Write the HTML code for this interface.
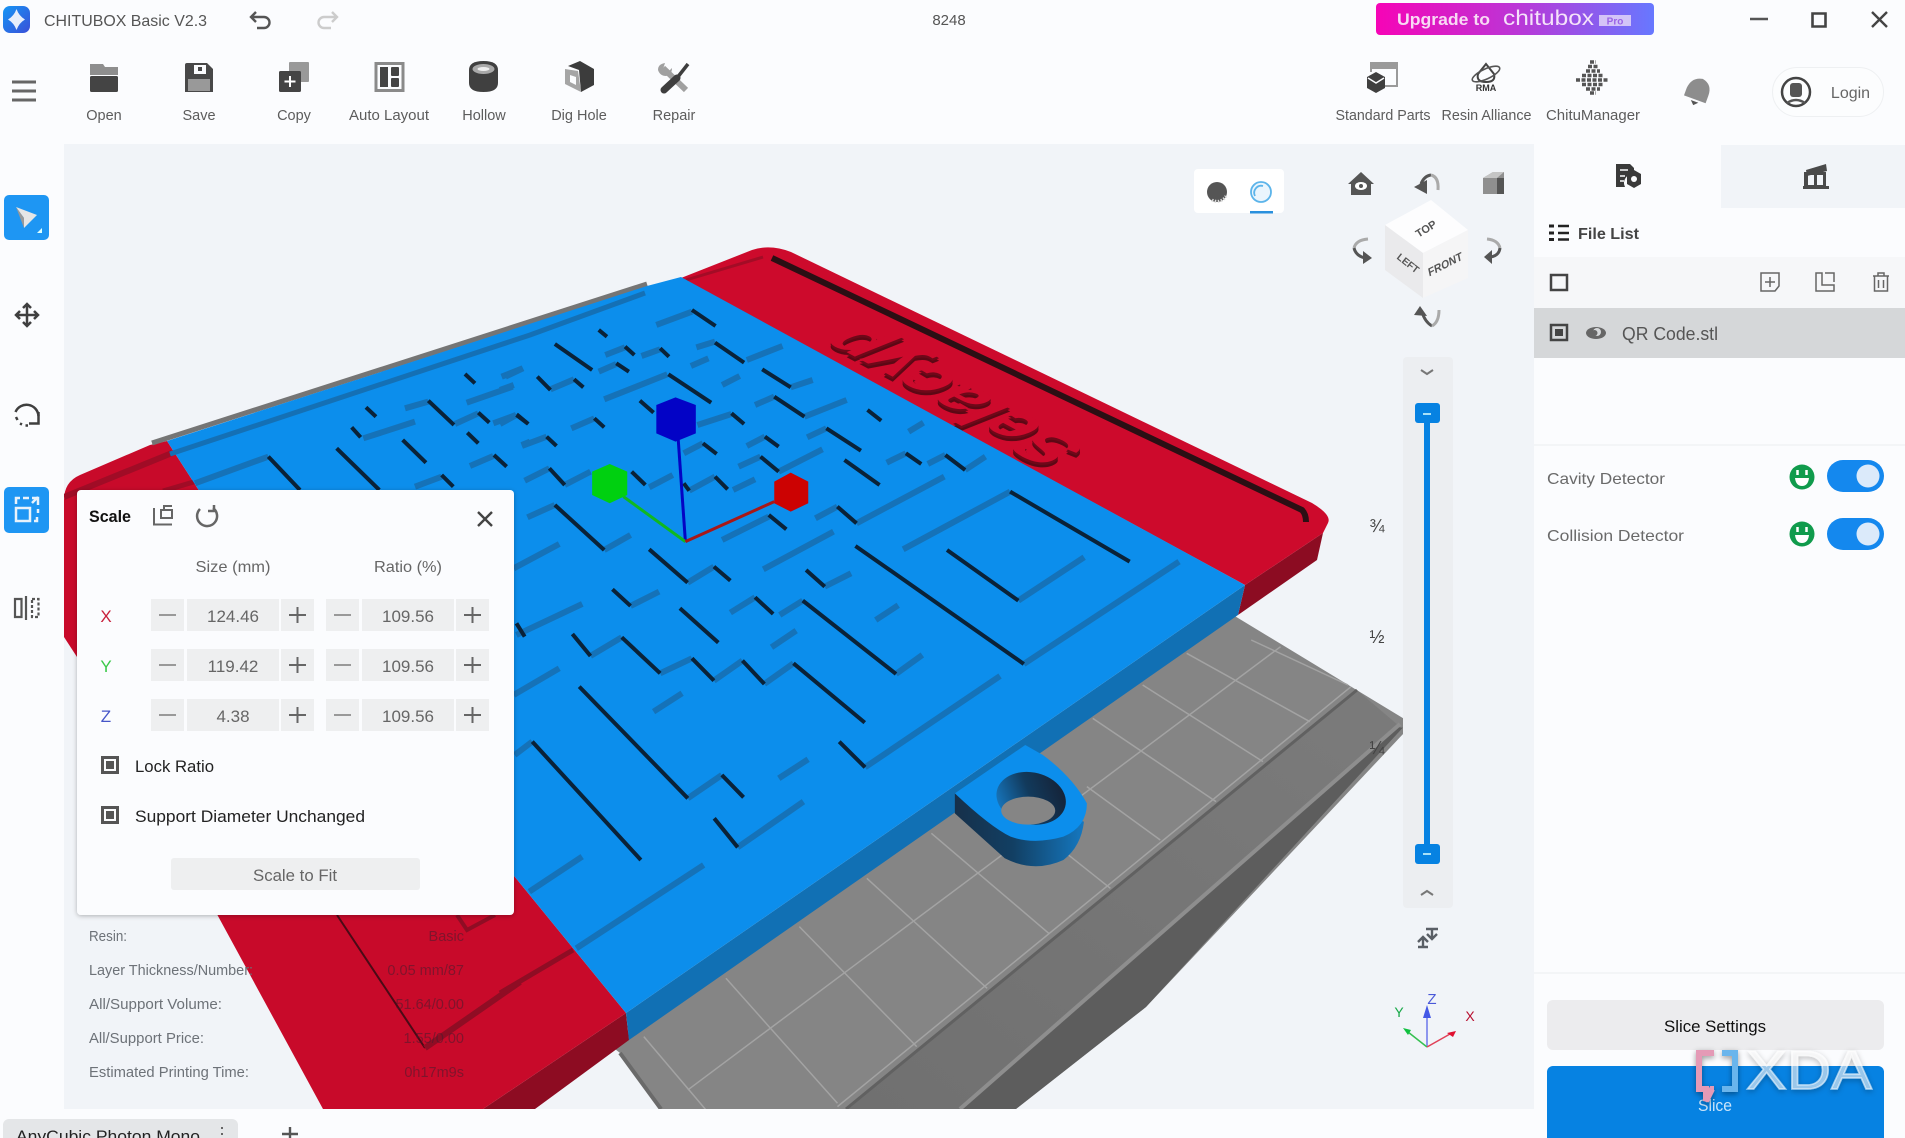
<!DOCTYPE html>
<html lang="en">
<head>
<meta charset="utf-8">
<title>CHITUBOX Basic V2.3</title>
<style>
html,body{margin:0;padding:0;width:1905px;height:1138px;overflow:hidden;background:#fbfcfe}
svg{display:block;font-family:"Liberation Sans",sans-serif}
svg *{vector-effect:non-scaling-stroke}
.lb{font-size:14.5px;fill:#5c5c5c;text-anchor:middle}
.st{font-size:14.5px;fill:#6d7278}
.sv{font-size:14.5px;fill:rgba(70,30,45,.55);text-anchor:end}
.v{font-size:17px;fill:#666;text-anchor:middle}
.ctl{fill:#eeeff0}
.pm{stroke:#666;stroke-width:2;fill:none}
.pl{stroke:#999;stroke-width:2;fill:none}
</style>
</head>
<body>
<svg xmlns="http://www.w3.org/2000/svg" width="1905" height="1138" viewBox="0 0 1905 1138">
<defs>
<clipPath id="vp"><rect x="64" y="144" width="1470" height="965"/></clipPath>
<clipPath id="bt"><rect x="0" y="1109" width="520" height="29"/></clipPath>
<linearGradient id="up" x1="0" x2="1" y1="0" y2="0"><stop offset="0" stop-color="#f604b6"/><stop offset=".5" stop-color="#bc35d6"/><stop offset="1" stop-color="#6778ff"/></linearGradient>
<linearGradient id="tabside" x1="0" x2="1" y1="0" y2="0"><stop offset="0" stop-color="#16304a"/><stop offset=".45" stop-color="#123f63"/><stop offset="1" stop-color="#1578c0"/></linearGradient>
<linearGradient id="hole" x1="0" x2="1" y1="0" y2="0"><stop offset="0" stop-color="#1673b8"/><stop offset=".5" stop-color="#123a5c"/><stop offset="1" stop-color="#15243a"/></linearGradient>
<linearGradient id="pl2" x1="0" x2="1" y1="1" y2="0"><stop offset="0" stop-color="#707070"/><stop offset="1" stop-color="#7b7b7b"/></linearGradient>
<filter id="sh" x="-10%" y="-10%" width="120%" height="120%"><feDropShadow dx="0" dy="1" stdDeviation="2.5" flood-color="#000" flood-opacity=".28"/></filter>
<filter id="wm" x="-20%" y="-30%" width="140%" height="170%"><feDropShadow dx="0" dy="2" stdDeviation="3" flood-color="#000" flood-opacity=".4"/></filter>
<linearGradient id="logo" x1="0" x2="1" y1="0" y2="1"><stop offset="0" stop-color="#1596f5"/><stop offset="1" stop-color="#3a4fd8"/></linearGradient>
</defs>

<rect width="1905" height="1138" fill="#fbfcfe"/>
<rect x="64" y="144" width="1470" height="965" fill="#f1f4f8"/>

<!-- 3D scene -->
<g clip-path="url(#vp)">
  <!-- gray plate -->
  <polygon points="1225,610 1238,618 1406,720 1404,733 1146,1007 1016,1109 661,1109 620,1053 610,1045" fill="#858585"/>
  <polygon points="1404,728 1408,722 1146,1007 1016,1109 960,1109 1398,727" fill="#5d5d5d"/>
  <polygon points="846,1109 1357,690 1398,725 960,1109" fill="url(#pl2)"/>
  <path d="M960 1109L1400 724" stroke="#8e8e8e" stroke-width="4" fill="none"/>
  <path d="M846 1109L1357 690" stroke="#616161" stroke-width="3" fill="none"/>
  <path d="M620 1053L661 1109" stroke="#6a6a6a" stroke-width="4" fill="none"/>
  <g transform="translate(500,640) scale(.5869,.3333)" fill="none" stroke="#a3a3a3" stroke-width="1.5">
    <path d="M320 1350L1330 20M575 1400L1450 140M245 1190L350 1408M385 1015L575 1390M510 860L710 1220M625 715L830 1045M735 580L935 880M965 640L1040 745M1000 440L1125 600M1010 235L1220 485M1095 135L1300 365M1170 40L1380 245M1280 0L1445 135"/>
  </g>

  <!-- red left part -->
  <polygon points="626,1013 629,1040 535,1109 483,1109" fill="#8d0c22"/>
  <path d="M64 500Q64 482 80 475L150 445L167 441L198 489L626 1013L483 1109L323 1109L77 657L64 637Z" fill="#c80a2a"/>
  <path d="M64 497L172 453" stroke="#a00c26" stroke-width="6" fill="none"/>
  <path d="M163 491L197 481" stroke="#a00c26" stroke-width="5" fill="none"/>
  <path d="M337 915L425 1048" stroke="#4a0a16" stroke-width="2" fill="none"/>
  <path d="M425 1048L520 982" stroke="#8f0d24" stroke-width="6" fill="none"/>
  <path d="M457 915L467 930L495 915" stroke="#8f0d24" stroke-width="4" fill="none"/>
  <path d="M500 993L573 950" stroke="#8f0d24" stroke-width="5" fill="none"/>

  <!-- red top strip -->
  <polygon points="1245,585 1323,533 1317,560 1238,615" fill="#8c0c22"/>
  <path d="M681 278L752 250Q770 244 791 252L1312 503Q1332 515 1328 523L1323 533L1245 585Z" fill="#cd0a2c"/>
  <path d="M686 280L763 257" stroke="#a30c26" stroke-width="3" fill="none"/>
  <path d="M772 258L1302 510Q1306 514 1306 522" stroke="#2b0f14" stroke-width="6" fill="none"/>
  <text transform="matrix(-.88,-.47,1.2,-.48,1090,454)" font-size="56" font-weight="700" fill="#5c0815" textLength="265" lengthAdjust="spacingAndGlyphs">Selacyp</text>
  <text transform="matrix(-.88,-.47,1.2,-.48,1090,451.500)" font-size="56" font-weight="700" fill="#6f0819" textLength="265" lengthAdjust="spacingAndGlyphs">Selacyp</text>
  <text transform="matrix(-.88,-.47,1.2,-.48,1090,449)" font-size="56" font-weight="700" fill="#cd0a2c" textLength="265" lengthAdjust="spacingAndGlyphs">Selacyp</text>

  <!-- blue -->
  <polygon points="1245,585 1238,615 629,1040 626,1013" fill="#1170b4"/>
  <path d="M152 443L647 284" stroke="#757575" stroke-width="5" fill="none"/>
  <polygon points="167,441 647,286 681,277 1245,585 626,1013 198,489" fill="#0c8eec"/>
  <path d="M170 454L530 335L645 293" stroke="#1470b5" stroke-width="5" fill="none"/>

  <!-- QR pattern left -->
  <g transform="translate(150,280) scale(.3333)" fill="none">
    <path stroke="#1572b8" stroke-width="6" d="M135 610L355 530M765 385L835 365M915 432L985 400M640 475L795 425M950 368L1088 320M1055 290L1118 265M1030 430L1098 405M1115 495L1140 485M960 558L1030 528M795 620L875 590"/>
    <path stroke="#0a2238" stroke-width="4" d="M355 530L450 630M835 362L912 435M648 382L678 410M605 442L632 472M560 505L688 630M758 480L828 548M945 282L975 310M985 398L1018 428M1100 403L1135 432M952 458L985 490M1032 525L1070 560M875 585L910 620"/>
  </g>
  <!-- QR pattern -->
  <g transform="translate(500,240) scale(.5485,.3333)" fill="none" stroke-linecap="butt">
    <path stroke="#1572b8" stroke-width="6" d="M285 255L350 215M450 360L515 318M358 322L392 305M192 345L228 322M258 348L292 328M348 378L380 355M180 395L212 372M10 410L42 385M0 450L25 435M92 448L135 418M405 435L437 408M190 478L305 403M530 442L570 420M465 495L500 470M555 530L632 480M745 575L772 548M0 552L30 525M130 565L172 535M360 555L422 522M40 618L85 590M450 618L483 590M560 592L595 565M335 640L370 610M435 680L475 650M508 695L588 628M705 668L740 640M780 672L812 645M848 690L885 650M45 722L90 685M118 735L165 695M272 742L315 705M345 752L392 710M425 750L465 718M50 832L100 795M575 835L615 800M650 850L810 710M405 900L490 830M190 930L238 885M25 985L108 912M735 928L930 755M480 988L608 875M945 1082L1065 952M955 1272L1238 965M342 1028L390 980M592 1040L640 1000M238 1098L290 1055M420 1118L465 1072M510 1125L552 1082M685 1140L726 1096M30 1185L150 1092M165 1248L222 1192M495 1222L540 1172M722 1302L770 1245M292 1300L350 1255M390 1322L442 1262M482 1332L535 1270M25 1365L108 1285M280 1415L332 1360"/>
    <path stroke="#0a2238" stroke-width="4" d="M350 210L393 258M100 312L168 390M180 270L195 290M228 320L245 345M292 325L308 350M392 308L445 368M212 370L235 395M478 388L530 442M68 410L92 450M135 418L152 442M307 403L385 488M255 482L280 518M500 470L555 530M422 520L445 552M670 510L695 542M30 525L50 550M172 535L190 562M85 590L103 618M595 565L658 632M483 590L508 620M370 610L395 642M475 650L508 695M628 660L692 735M740 640L768 672M812 645L848 690M90 685L118 735M240 695L265 735M392 710L415 748M335 730L345 752M100 795L190 930M615 800L650 850M490 825L522 868M930 755L1148 965M815 930L945 1082M648 918L955 1272M272 928L342 1028M390 980L420 1022M558 990L592 1040M205 1048L238 1098M465 1072L498 1122M552 1082L722 1302M328 1105L398 1208M132 1182L165 1248M222 1192L292 1300M350 1255L390 1322M442 1262L482 1332M535 1270L665 1448M30 1150L45 1190"/>
  </g>
  <g transform="translate(500,640) scale(.5869,.3333)" fill="none">
    <path stroke="#1572b8" stroke-width="6" d="M320 475L378 405M405 622L517 485M622 382L852 108M475 415L525 358M25 345L55 305M50 755L140 650M130 925L347 675"/>
    <path stroke="#0a2238" stroke-width="4" d="M135 140L320 475M378 405L415 472M55 305L240 660M365 535L405 622M578 305L622 382"/>
    <!-- key tab -->
    <path d="M775 460L775 520L860 655Q910 700 960 660Q990 620 995 545Z" fill="url(#tabside)"/>
    <path d="M895 315L925 345Q975 410 1000 490Q1000 560 960 590Q910 615 870 590Q835 560 775 460Z" fill="#0c8eec"/>
    <ellipse cx="905" cy="475" rx="58" ry="80" transform="rotate(-12 905 475)" fill="url(#hole)"/>
    <ellipse cx="900" cy="512" rx="46" ry="42" fill="#858585"/>
  </g>

  <!-- gizmo -->
  <g transform="translate(500,240) scale(.5485,.3333)">
    <path d="M325 600L338 905" stroke="#0404c4" stroke-width="3" fill="none"/>
    <path d="M225 770L338 905" stroke="#10b820" stroke-width="3" fill="none"/>
    <path d="M500 785L338 905" stroke="#a81818" stroke-width="3" fill="none"/>
    <polygon points="320,472 357,495 357,580 320,605 285,580 285,495" fill="#0303c6"/>
    <polygon points="200,672 232,695 232,765 200,790 168,765 168,695" fill="#00d010"/>
    <polygon points="530,698 562,725 562,790 530,815 500,790 500,725" fill="#cc0202"/>
  </g>
</g>

<!-- stats -->
<text class="st" x="89" y="941" textLength="38" lengthAdjust="spacingAndGlyphs">Resin:</text>
<text class="st" x="89" y="975" textLength="164" lengthAdjust="spacingAndGlyphs">Layer Thickness/Number:</text>
<text class="st" x="89" y="1009" textLength="133" lengthAdjust="spacingAndGlyphs">All/Support Volume:</text>
<text class="st" x="89" y="1043" textLength="115" lengthAdjust="spacingAndGlyphs">All/Support Price:</text>
<text class="st" x="89" y="1077" textLength="160" lengthAdjust="spacingAndGlyphs">Estimated Printing Time:</text>
<text class="sv" x="464" y="941">Basic</text>
<text class="sv" x="464" y="975">0.05 mm/87</text>
<text class="sv" x="464" y="1009">51.64/0.00</text>
<text class="sv" x="464" y="1043">1.55/0.00</text>
<text class="sv" x="464" y="1077">0h17m9s</text>

<!-- title bar -->
<rect x="3" y="6" width="27" height="27" rx="7" fill="url(#logo)"/>
<path d="M16.5 9Q19 16 25 19.5Q19 23 16.5 30Q14 23 8 19.5Q14 16 16.5 9Z" fill="#e6eefb"/>
<text x="44" y="26" font-size="16" fill="#555" textLength="163" lengthAdjust="spacingAndGlyphs">CHITUBOX Basic V2.3</text>
<path d="M256 12L251 17L256 22M251 17H264A5.5 5.5 0 0 1 264 28H257" fill="none" stroke="#555" stroke-width="2.4"/>
<path d="M332 12L337 17L332 22M337 17H324A5.5 5.5 0 0 0 324 28H331" fill="none" stroke="#ccc" stroke-width="2.4"/>
<text x="949" y="25" font-size="15" fill="#555" text-anchor="middle">8248</text>

<rect x="1376" y="3" width="278" height="32" rx="4" fill="url(#up)"/>
<text x="1397" y="25" font-size="16.5" font-weight="700" fill="#f8d9f4" textLength="93" lengthAdjust="spacingAndGlyphs">Upgrade to</text>
<text x="1503" y="25" font-size="21" fill="#f5e2fa" textLength="91" lengthAdjust="spacingAndGlyphs">chitubox</text>
<rect x="1599" y="15" width="32" height="11" fill="#e2d5f8" opacity=".85"/>
<text x="1615" y="24.500" font-size="10" font-weight="700" fill="#9a63e6" text-anchor="middle">Pro</text>

<path d="M1750 19H1768" stroke="#555" stroke-width="2.6"/>
<rect x="1812.5" y="13.5" width="13" height="13" fill="none" stroke="#444" stroke-width="2.6"/>
<path d="M1872 12L1887 27M1887 12L1872 27" stroke="#444" stroke-width="2.4"/>

<!-- toolbar -->
<path d="M12 82H36M12 91H36M12 100H36" stroke="#666" stroke-width="3"/>

<!-- open -->
<path d="M90 64H103L105 67H118V75H90Z" fill="#8e8e8e"/><rect x="90" y="76" width="28" height="16" rx="1.5" fill="#444"/>
<!-- save -->
<path d="M185 65Q185 63 187 63H207L213 69V92H185Z" fill="#484848"/><rect x="194" y="65" width="12" height="9" fill="#fbfcfe"/><rect x="198" y="67" width="4" height="4" fill="#484848"/><rect x="188" y="79" width="22" height="12" fill="#999"/>
<!-- copy -->
<rect x="289" y="62" width="20" height="20" rx="1" fill="#999"/><rect x="279" y="71" width="22" height="21" rx="1.5" fill="#444"/><path d="M290 76V87M284.5 81.5H295.5" stroke="#fff" stroke-width="2"/>
<!-- auto layout -->
<rect x="376" y="63.5" width="27" height="27" fill="#fbfcfe" stroke="#8a8a8a" stroke-width="3"/><rect x="380" y="67" width="8" height="20" fill="#444"/><rect x="391" y="67" width="8" height="9" rx="1" fill="#444"/><rect x="391" y="78" width="8" height="9" rx="1" fill="#444"/>
<!-- hollow -->
<path d="M469 70Q469 61 483.5 61Q498 61 498 70V83Q498 92 483.5 92Q469 92 469 83Z" fill="#404040"/><ellipse cx="483.5" cy="69" rx="11" ry="5" fill="#a9a9a9"/><ellipse cx="483.5" cy="69" rx="6" ry="2" fill="#eee"/>
<!-- dig hole -->
<polygon points="580,61 594,69 594,85 581,92 579,70 568,66" fill="#3c3c3c"/><polygon points="565,69 578,71 581,92 565,84" fill="#a5a5a5"/><path d="M570 75L576 77V85L570 82Z" fill="#fbfcfe"/>
<!-- repair -->
<path d="M663 68L686 90" stroke="#a0a0a0" stroke-width="6" fill="none"/><path d="M658 70Q658 64 665 63L663 69L668 72L672 68Q672 75 666 76Q660 76 658 70Z" fill="#a0a0a0"/>
<path d="M688 64L677 78" stroke="#3e3e3e" stroke-width="3.500" fill="none"/><path d="M677 78L664 90" stroke="#3e3e3e" stroke-width="7" stroke-linecap="round" fill="none"/>

<text class="lb" x="104" y="120">Open</text>
<text class="lb" x="199" y="120">Save</text>
<text class="lb" x="294" y="120">Copy</text>
<text class="lb" x="389" y="120" textLength="80" lengthAdjust="spacingAndGlyphs">Auto Layout</text>
<text class="lb" x="484" y="120">Hollow</text>
<text class="lb" x="579" y="120">Dig Hole</text>
<text class="lb" x="674" y="120">Repair</text>
<text class="lb" x="1383" y="120" textLength="95" lengthAdjust="spacingAndGlyphs">Standard Parts</text>
<text class="lb" x="1486.500" y="120" textLength="90" lengthAdjust="spacingAndGlyphs">Resin Alliance</text>
<text class="lb" x="1593" y="120" textLength="94" lengthAdjust="spacingAndGlyphs">ChituManager</text>

<!-- standard parts -->
<path d="M1370 62H1398V87H1380V85H1396V69H1372V72H1370Z" fill="#9a9a9a"/>
<polygon points="1376,72 1385,77 1385,88 1376,93 1367,88 1367,77" fill="#3f3f3f"/><path d="M1368 78L1376 83L1384 78" stroke="#fbfcfe" stroke-width="1.500" fill="none"/>
<!-- RMA -->
<path d="M1486 64L1494 74Q1496 82 1486 82Q1476 82 1478 74Z" fill="none" stroke="#444" stroke-width="2"/><ellipse cx="1486" cy="74" rx="15" ry="5" transform="rotate(-25 1486 74)" fill="none" stroke="#555" stroke-width="1.600"/>
<text x="1486" y="91" font-size="9" font-weight="700" fill="#333" text-anchor="middle">RMA</text>
<!-- manager -->
<g stroke="#555" stroke-width="3.500" stroke-dasharray="4 1.500">
<path d="M1590 62H1596M1588 66.500H1598M1586 71H1600M1582 75.500H1604M1576 80H1609M1582 84.500H1604M1586 89H1600M1590 93H1596"/></g>
<!-- bell -->
<g transform="rotate(20 1698 92)"><path d="M1698 78Q1709 80 1709 92V100H1686V92Q1687 80 1698 78Z" fill="#8d8d8d"/><path d="M1694 102H1702L1698 106Z" fill="#555"/></g>
<!-- login -->
<rect x="1772.500" y="67.500" width="111" height="49" rx="24.500" fill="#fcfdfe" stroke="#eef0f2"/>
<circle cx="1796" cy="92" r="14" fill="none" stroke="#444" stroke-width="2.500"/><rect x="1790" y="83" width="12" height="14" rx="3" fill="#555"/><path d="M1787 103Q1796 97 1805 103" stroke="#555" stroke-width="2.500" fill="none"/>
<text x="1850.500" y="98" font-size="16" fill="#666" text-anchor="middle">Login</text>

<!-- left tools -->
<rect x="4" y="195" width="45" height="45" rx="5" fill="#1e96f3"/>
<polygon points="16,207 37,215 24,228 24,218" fill="#e6e6e6"/><polygon points="16,207 24,218 24,228" fill="#999"/><polygon points="42,228 42,233 37,233" fill="#dff"/>
<g fill="none" stroke="#3f3f3f" stroke-width="2.500">
<path d="M27 305V325M17 315H37M23 308L27 304L31 308M23 322L27 326L31 322M20 311L16 315L20 319M34 311L38 315L34 319"/>
<path d="M15.500 412A12 12 0 0 1 38.500 416"/><path d="M16 417L17.500 420M20 423.500L22 424.500M25.500 425.500H28" />
<path d="M38.500 412V423.500H29"/>
</g>
<rect x="4" y="487" width="45" height="46" rx="5" fill="#1e96f3"/>
<g fill="none" stroke="#e8f2fb" stroke-width="2.500">
<rect x="16" y="508" width="14" height="13"/><path d="M16 504V498H20M23 498H29M32 498H38V505M38 497L32 503M38 509V513M37 517V521H34"/></g>
<g fill="none" stroke="#555" stroke-width="2.200"><rect x="15" y="599" width="6.500" height="18"/><path d="M26 596V620"/><rect x="32" y="599" width="6.500" height="18" stroke-dasharray="3 2"/></g>

<!-- scale panel -->
<rect x="77" y="490" width="437" height="425" rx="4" fill="#fbfcfe" filter="url(#sh)"/>
<text x="89" y="522" font-size="16.500" font-weight="700" fill="#111" textLength="42" lengthAdjust="spacingAndGlyphs">Scale</text>
<g fill="none" stroke="#666" stroke-width="2"><path d="M154 508V524.500H172M161 518H172V510H161ZM164 510V506H172"/></g>
<path d="M200 509A10 10 0 1 0 213 508M214 505V511H208" fill="none" stroke="#666" stroke-width="2.500"/>
<path d="M478 512L492 526M492 512L478 526" stroke="#444" stroke-width="2.400"/>
<text x="233" y="572" font-size="16" fill="#666" text-anchor="middle" textLength="75" lengthAdjust="spacingAndGlyphs">Size (mm)</text>
<text x="408" y="572" font-size="16" fill="#666" text-anchor="middle" textLength="68" lengthAdjust="spacingAndGlyphs">Ratio (%)</text>

<text x="106" y="622" font-size="17" fill="#c8213c" text-anchor="middle">X</text>
<text x="106" y="672" font-size="17" fill="#3cc94a" text-anchor="middle">Y</text>
<text x="106" y="722" font-size="17" fill="#4656c8" text-anchor="middle">Z</text>

<g class="ctl">
<rect x="151" y="599" width="33" height="32"/><rect x="187" y="599" width="92" height="32"/><rect x="281" y="599" width="33" height="32"/><rect x="326" y="599" width="33" height="32"/><rect x="362" y="599" width="92" height="32"/><rect x="456" y="599" width="33" height="32"/>
<rect x="151" y="649" width="33" height="32"/><rect x="187" y="649" width="92" height="32"/><rect x="281" y="649" width="33" height="32"/><rect x="326" y="649" width="33" height="32"/><rect x="362" y="649" width="92" height="32"/><rect x="456" y="649" width="33" height="32"/>
<rect x="151" y="699" width="33" height="32"/><rect x="187" y="699" width="92" height="32"/><rect x="281" y="699" width="33" height="32"/><rect x="326" y="699" width="33" height="32"/><rect x="362" y="699" width="92" height="32"/><rect x="456" y="699" width="33" height="32"/>
</g>
<path class="pl" d="M159 615H176M334 615H351M159 665H176M334 665H351M159 715H176M334 715H351"/>
<path class="pm" d="M289 615H306M297.500 607V623M464 615H481M472.500 607V623M289 665H306M297.500 657V673M464 665H481M472.500 657V673M289 715H306M297.500 707V723M464 715H481M472.500 707V723"/>
<text class="v" x="233" y="622">124.46</text><text class="v" x="408" y="622">109.56</text>
<text class="v" x="233" y="672">119.42</text><text class="v" x="408" y="672">109.56</text>
<text class="v" x="233" y="722">4.38</text><text class="v" x="408" y="722">109.56</text>

<rect x="102.500" y="757.500" width="15" height="15" fill="none" stroke="#555" stroke-width="3"/><rect x="106" y="761" width="8" height="8" fill="#555"/>
<text x="135" y="772" font-size="17" fill="#222" textLength="79" lengthAdjust="spacingAndGlyphs">Lock Ratio</text>
<rect x="102.500" y="807.500" width="15" height="15" fill="none" stroke="#555" stroke-width="3"/><rect x="106" y="811" width="8" height="8" fill="#555"/>
<text x="135" y="822" font-size="17" fill="#222" textLength="230" lengthAdjust="spacingAndGlyphs">Support Diameter Unchanged</text>
<rect x="171" y="858" width="249" height="32" rx="3" fill="#eeeff0"/>
<text x="295" y="881" font-size="17" fill="#666" text-anchor="middle" textLength="84" lengthAdjust="spacingAndGlyphs">Scale to Fit</text>

<!-- mode panel -->
<rect x="1194" y="169" width="90" height="44" rx="4" fill="#fff"/>
<circle cx="1217" cy="192" r="10" fill="#555"/><path d="M1212 200A10 10 0 0 0 1226 196" stroke="#ddd" stroke-width="3" stroke-dasharray="1.500 1.500" fill="none"/>
<circle cx="1261" cy="192" r="10" fill="#eaf5fd" stroke="#5cb4ea" stroke-width="1.800"/><path d="M1255 196A7 7 0 0 1 1263 186" stroke="#5cb4ea" stroke-width="1.800" fill="none"/>
<rect x="1250" y="211" width="23" height="2.500" fill="#2a90dd"/>

<!-- view controls -->
<path d="M1361 172L1374 184H1371V195H1351V184H1348Z" fill="#555"/><ellipse cx="1361" cy="186" rx="6" ry="4" fill="#fff"/><circle cx="1361" cy="186" r="2" fill="#555"/>
<polygon points="1483,178 1493,172 1504,172 1504,194 1483,194" fill="#8f8f8f"/><polygon points="1483,178 1493,172 1504,172 1497,178" fill="#c5c5c5"/><rect x="1497" y="178" width="7" height="16" fill="#555"/>
<g fill="none" stroke-width="3">
<path d="M1421 184Q1424 176 1431 175" stroke="#555"/><path d="M1431 175Q1439 177 1438 190" stroke="#aaa"/>
<path d="M1368 239Q1356 240 1354 248" stroke="#aaa"/><path d="M1354 248Q1356 256 1365 258" stroke="#555"/>
<path d="M1487 239Q1498 240 1500 248" stroke="#aaa"/><path d="M1500 248Q1499 256 1490 257" stroke="#555"/>
<path d="M1422 312Q1425 322 1432 326" stroke="#555"/><path d="M1432 326Q1439 322 1439 310" stroke="#aaa"/>
</g>
<polygon points="1414,187 1427,180 1427,194" fill="#555"/><polygon points="1372,258 1363,251 1363,264" fill="#555"/><polygon points="1484,257 1492,250 1492,264" fill="#555"/><polygon points="1420,306 1414,315 1427,316" fill="#555"/>

<polygon points="1431,200 1468,230 1423,253 1385,225" fill="#fdfdfe"/>
<polygon points="1385,225 1423,253 1423,298 1385,270" fill="#eaeaec"/>
<polygon points="1423,253 1468,230 1468,278 1423,298" fill="#f5f5f6"/>
<text transform="translate(1428,232) rotate(-32)" font-size="11" font-weight="700" fill="#555" text-anchor="middle">TOP</text>
<text transform="translate(1406,266) rotate(38)" font-size="10" font-weight="700" fill="#555" text-anchor="middle">LEFT</text>
<text transform="translate(1446,268) rotate(-27) skewX(-15)" font-size="11" font-weight="700" fill="#555" text-anchor="middle">FRONT</text>

<!-- slider -->
<rect x="1403" y="357" width="50" height="551" rx="4" fill="#eceef1"/>
<path d="M1421 370L1427 374L1433 370M1421 895L1427 891L1433 895" fill="none" stroke="#777" stroke-width="2"/>
<rect x="1424" y="405" width="6" height="448" fill="#0682e2"/>
<rect x="1415" y="403" width="25" height="20" rx="3" fill="#0682e2"/><path d="M1423 414H1431" stroke="#dff" stroke-width="1.500"/>
<rect x="1415" y="844" width="25" height="20" rx="3" fill="#0682e2"/><path d="M1423 854H1431" stroke="#dff" stroke-width="1.500"/>
<text x="1377" y="532" font-size="18" fill="#444" text-anchor="middle">¾</text>
<text x="1377" y="643" font-size="18" fill="#444" text-anchor="middle">½</text>
<text x="1377" y="754" font-size="18" fill="#444" text-anchor="middle">¼</text>
<path d="M1418 947H1428M1423 947V938M1418 942L1423 937L1428 942M1426 929H1438M1432 929V938M1427 934L1432 939L1437 934" fill="none" stroke="#5a5f66" stroke-width="2.400"/>

<!-- axes -->
<path d="M1427 1047V1016" stroke="#8d96ee" stroke-width="2"/><polygon points="1427,1005 1431,1018 1423,1018" fill="#4458e6"/>
<path d="M1427 1047L1408 1032" stroke="#35c050" stroke-width="1.500"/><polygon points="1403,1028 1411,1030 1408,1035" fill="#10c040"/>
<path d="M1427 1047L1450 1034" stroke="#e04058" stroke-width="1.500"/><polygon points="1456,1031 1453,1037 1447,1033" fill="#e01030"/>
<text x="1432" y="1004" font-size="15" fill="#4a58d8" text-anchor="middle">Z</text>
<text x="1399" y="1017" font-size="14" fill="#18a848" text-anchor="middle">Y</text>
<text x="1470" y="1021" font-size="14" fill="#b81030" text-anchor="middle">X</text>

<!-- right panel -->
<rect x="1534" y="144" width="371" height="994" fill="#fbfcfe"/>
<rect x="1721" y="145" width="184" height="63" fill="#f1f4f8"/>
<path d="M1616 164H1630L1634 168V174A9 9 0 0 0 1625 187H1616Z" fill="#3a3a3a"/><path d="M1620 170H1628M1620 176H1625M1620 181H1624" stroke="#fbfcfe" stroke-width="1.500"/>
<polygon points="1634,170 1641,174 1641,184 1634,188 1627,184 1627,174" fill="#3a3a3a"/><circle cx="1634" cy="179" r="3" fill="#fbfcfe"/>
<path d="M1804 186V172H1826V186H1829V189H1803V186Z" fill="#4a4a4a"/><rect x="1808" y="175" width="6" height="10" fill="#f1f4f8"/><rect x="1817" y="175" width="6" height="10" fill="#f1f4f8"/><polygon points="1806,170 1826,164 1827,171 1807,176" fill="#4a4a4a"/>

<path d="M1549 226H1554M1549 233H1554M1549 239.500H1554" stroke="#222" stroke-width="3"/><path d="M1558 226H1569M1558 233H1569M1558 239.500H1569" stroke="#222" stroke-width="2.500"/>
<text x="1578" y="239" font-size="16" font-weight="700" fill="#444" textLength="61" lengthAdjust="spacingAndGlyphs">File List</text>

<rect x="1534" y="257" width="371" height="51" fill="#f6f7f9"/>
<rect x="1551" y="275" width="16" height="15" fill="none" stroke="#444" stroke-width="2.500"/>
<path d="M1761 273H1779V286L1775 291H1761ZM1770 277V287M1765 282H1775" fill="none" stroke="#666" stroke-width="1.500"/>
<path d="M1816 273H1822V285H1834V291H1816ZM1825 273H1834V282" fill="none" stroke="#666" stroke-width="1.500"/>
<path d="M1873 276H1889M1878 276V273H1884V276M1874.500 276V291H1887.500V276M1878.500 280V288M1883.500 280V288" fill="none" stroke="#666" stroke-width="1.500"/>

<rect x="1534" y="308" width="371" height="50" fill="#d5d7d9"/>
<rect x="1551" y="325" width="16" height="15" fill="none" stroke="#444" stroke-width="2.500"/><rect x="1555" y="329" width="8" height="7" fill="#444"/>
<ellipse cx="1596" cy="333" rx="10" ry="6" fill="#666"/><circle cx="1597" cy="332" r="4" fill="#d5d7d9"/><circle cx="1594.500" cy="333" r="3" fill="#666"/>
<text x="1622" y="340" font-size="18" fill="#555" textLength="96" lengthAdjust="spacingAndGlyphs">QR Code.stl</text>

<rect x="1534" y="444" width="371" height="2" fill="#f3f5f7"/>
<text x="1547" y="484" font-size="16" fill="#6a6a6a" textLength="118" lengthAdjust="spacingAndGlyphs">Cavity Detector</text>
<text x="1547" y="541" font-size="16" fill="#6a6a6a" textLength="137" lengthAdjust="spacingAndGlyphs">Collision Detector</text>
<g>
<circle cx="1802" cy="477" r="12.500" fill="#109b4c"/><path d="M1795 478H1809Q1808 486 1802 486Q1796 486 1795 478Z" fill="#fff"/><path d="M1797.500 470V475M1806.500 470V475" stroke="#fff" stroke-width="2.500"/>
<circle cx="1802" cy="534" r="12.500" fill="#109b4c"/><path d="M1795 535H1809Q1808 543 1802 543Q1796 543 1795 535Z" fill="#fff"/><path d="M1797.500 527V532M1806.500 527V532" stroke="#fff" stroke-width="2.500"/>
</g>
<rect x="1827" y="460" width="57" height="32" rx="16" fill="#1488ee"/><circle cx="1868" cy="476" r="11.500" fill="#dbeafa"/>
<rect x="1827" y="518" width="57" height="32" rx="16" fill="#1488ee"/><circle cx="1868" cy="534" r="11.500" fill="#dbeafa"/>

<rect x="1534" y="972" width="371" height="2" fill="#f3f5f7"/>
<rect x="1547" y="1000" width="337" height="50" rx="6" fill="#ececee"/>
<text x="1715" y="1032" font-size="17" fill="#111" text-anchor="middle" textLength="102" lengthAdjust="spacingAndGlyphs">Slice Settings</text>
<rect x="1547" y="1066" width="337" height="80" rx="6" fill="#0682e2"/>
<text x="1715" y="1111" font-size="16.500" fill="#c9e4fa" text-anchor="middle" textLength="34" lengthAdjust="spacingAndGlyphs">Slice</text>

<!-- watermark -->
<g filter="url(#wm)">
<path d="M1714 1053H1699V1089H1706V1101L1712 1089H1714" fill="none" stroke="#e49ab6" stroke-width="6"/>
<path d="M1722 1053H1735V1089H1722" fill="none" stroke="#6bb5ec" stroke-width="6"/>
<text x="1746" y="1089" font-size="55" font-weight="400" fill="#fff" fill-opacity=".55" stroke="#fff" stroke-opacity=".55" stroke-width="1.500" textLength="126" lengthAdjust="spacingAndGlyphs">XDA</text>
</g>

<!-- bottom tab -->
<rect x="3" y="1119" width="235" height="30" rx="6" fill="#e4e6e8"/>
<g clip-path="url(#bt)">
<text x="16" y="1142" font-size="17" fill="#222" textLength="184" lengthAdjust="spacingAndGlyphs">AnyCubic Photon Mono</text>
<path d="M222 1127V1129M222 1133V1135" stroke="#666" stroke-width="2"/>
</g>
<path d="M282 1134H298M290 1127V1138" stroke="#555" stroke-width="2.400"/>
</svg>
</body>
</html>
